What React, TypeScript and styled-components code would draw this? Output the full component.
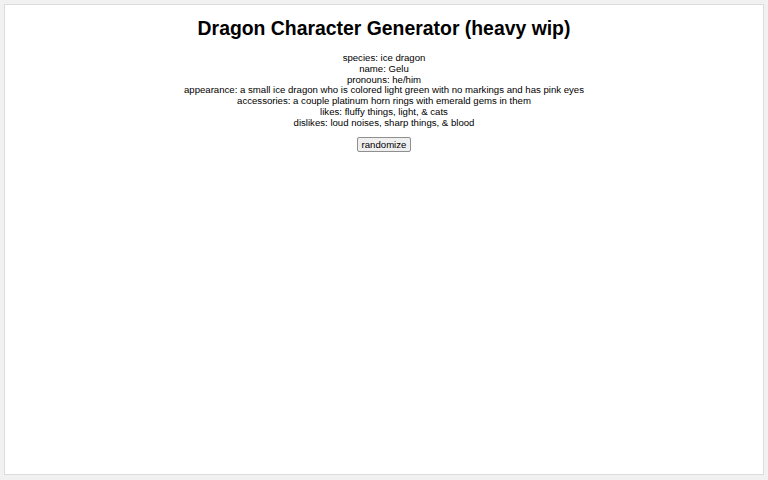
import React, { useState } from 'react';
import styled, { createGlobalStyle } from 'styled-components';

const GlobalStyle = createGlobalStyle`
  html, body {
    margin: 0;
    padding: 0;
    background: #f1f1f1;
  }
  body {
    font-family: "Liberation Sans", Arial, sans-serif;
    color: #000;
  }
`;

const Page = styled.div`
  margin: 4px 4px 0 4px;
  height: 471px;
  box-sizing: border-box;
  background: #fff;
  border: 1px solid #dcdcdc;
  display: flex;
  flex-direction: column;
  align-items: center;
  padding-top: 12px;
`;

const Title = styled.h1`
  margin: 0 0 13px 0;
  font-size: 19.4px;
  font-weight: bold;
  line-height: 23px;
`;

const Details = styled.div`
  font-size: 9.6px;
  line-height: 10.8px;
  text-align: center;
`;

const Line = styled.div``;

const Button = styled.button`
  margin-top: 8px;
  font-family: "Liberation Sans", Arial, sans-serif;
  font-size: 9.6px;
  line-height: 11px;
  padding: 1px 4px;
  background: #efefef;
  border: 1px solid #8f8f8f;
  border-radius: 2px;
  color: #000;
`;

const dragon = {
  species: 'ice dragon',
  name: 'Gelu',
  pronouns: 'he/him',
  appearance: 'a small ice dragon who is colored light green with no markings and has pink eyes',
  accessories: 'a couple platinum horn rings with emerald gems in them',
  likes: 'fluffy things, light, & cats',
  dislikes: 'loud noises, sharp things, & blood',
};

export default function App() {
  const [d] = useState(dragon);
  return (
    <>
      <GlobalStyle />
      <Page>
        <Title>Dragon Character Generator (heavy wip)</Title>
        <Details>
          {Object.entries(d).map(([k, v]) => (
            <Line key={k}>{k}: {v}</Line>
          ))}
        </Details>
        <Button>randomize</Button>
      </Page>
    </>
  );
}
